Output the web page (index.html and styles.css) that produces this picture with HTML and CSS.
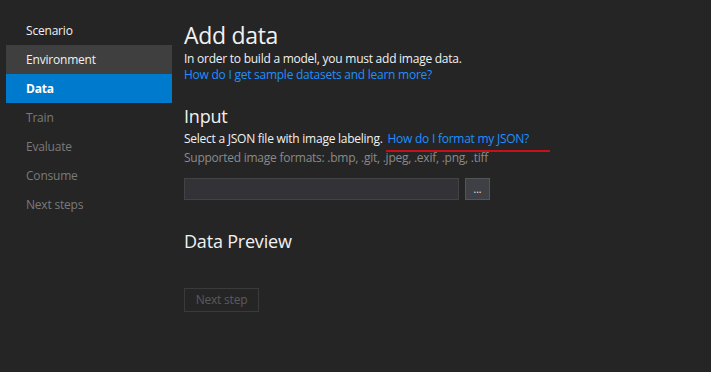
FILE: index.html
```html
<!DOCTYPE html>
<html>
<head>
<meta charset="utf-8">
<link rel="stylesheet" href="styles.css">
</head>
<body>
<div class="app">
  <nav class="sidebar">
    <div class="nav-item done">Scenario</div>
    <div class="nav-item done hover">Environment</div>
    <div class="nav-item active">Data</div>
    <div class="nav-item">Train</div>
    <div class="nav-item">Evaluate</div>
    <div class="nav-item">Consume</div>
    <div class="nav-item">Next steps</div>
  </nav>
  <main class="content">
    <h1 class="title">Add data</h1>
    <p class="text">In order to build a model, you must add image data.</p>
    <a class="link">How do I get sample datasets and learn more?</a>
    <h2 class="section">Input</h2>
    <p class="text">Select a JSON file with image labeling. <a class="link marked">How do I format my JSON?</a></p>
    <p class="text muted">Supported image formats: .bmp, .git, .jpeg, .exif, .png, .tiff</p>
    <div class="file-row">
      <div class="file-input"></div>
      <div class="browse">...</div>
    </div>
    <h2 class="section preview">Data Preview</h2>
    <div class="next-btn">Next step</div>
  </main>
</div>
</body>
</html>
```
FILE: styles.css
```css
html, body {
  margin: 0;
  padding: 0;
  background: #252526;
  height: 100%;
}
body {
  font-family: "Open Sans", "Noto Sans", sans-serif;
  color: #f1f1f1;
}
.app {
  display: flex;
  height: 372px;
}
.sidebar {
  width: 166px;
  margin-left: 6px;
  padding-top: 16px;
  display: flex;
  flex-direction: column;
}
.nav-item {
  height: 29px;
  line-height: 29px;
  padding-left: 20px;
  font-size: 12px;
  color: #7a7a7a;
  letter-spacing: -0.2px;
}
.nav-item.done { color: #f1f1f1; }
.nav-item.hover { background: #3f3f40; }
.nav-item.active { background: #007acc; color: #ffffff; font-weight: 700; }
.content {
  margin-left: 12px;
  padding-top: 20px;
  display: flex;
  flex-direction: column;
  align-items: flex-start;
}
.title {
  margin: 0 0 1px;
  font-size: 23px;
  font-weight: 400;
  line-height: 30px;
  letter-spacing: -0.3px;
}
.text {
  margin: 0;
  font-size: 12px;
  line-height: 16px;
  letter-spacing: -0.25px;
}
.muted { color: #8a8a8a; margin-top: 3px; }
.link {
  color: #1e90ff;
  font-size: 12px;
  line-height: 15px;
  letter-spacing: -0.25px;
}
.marked {
  position: relative;
  margin-left: 2px;
}
.marked::after {
  content: "";
  position: absolute;
  left: -2px;
  top: 20px;
  width: 164px;
  height: 2px;
  background: #c8101a;
}
.section {
  margin: 22px 0 3px;
  font-size: 18px;
  font-weight: 400;
  line-height: 24px;
  letter-spacing: -0.2px;
}
.file-row {
  display: flex;
  gap: 6px;
  margin-top: 12px;
}
.file-input {
  width: 273px;
  height: 20px;
  background: #333337;
  border: 1px solid #434346;
}
.browse {
  width: 23px;
  height: 20px;
  background: #3f3f46;
  border: 1px solid #555558;
  color: #f1f1f1;
  font-size: 10px;
  line-height: 20px;
  text-align: center;
}
.preview { margin-top: 29px; }
.next-btn {
  margin-top: 32px;
  width: 73px;
  height: 22px;
  border: 1px solid #3a3a3c;
  color: #5a5a5a;
  font-size: 12px;
  line-height: 22px;
  text-align: center;
  letter-spacing: -0.2px;
}
```
